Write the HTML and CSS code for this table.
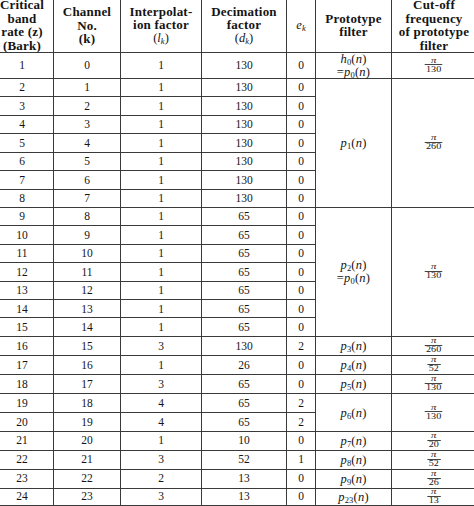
FILE: index.html
```html
<!DOCTYPE html>
<html>
<head>
<meta charset="utf-8">
<link rel="stylesheet" href="styles.css">
</head>
<body>
<div class="page">
<div class="grid">
  <div class="c h"><div>Critical<br>band<br>rate (z)<br>(Bark)</div></div>
  <div class="c h"><div>Channel<br>No.<br>(k)</div></div>
  <div class="c h"><div>Interpolat-<br>ion factor<br><span class="m">(<i>l</i><sub><i>k</i></sub>)</span></div></div>
  <div class="c h"><div>Decimation<br>factor<br><span class="m">(<i>d</i><sub><i>k</i></sub>)</span></div></div>
  <div class="c h"><div><span class="m"><i>e</i><sub><i>k</i></sub></span></div></div>
  <div class="c h"><div>Prototype<br>filter</div></div>
  <div class="c h"><div>Cut-off<br>frequency<br>of prototype<br>filter</div></div>

  <div class="c">1</div><div class="c">0</div><div class="c">1</div><div class="c">130</div><div class="c">0</div>
  <div class="c m"><div class="two"><span><i>h</i><sub>0</sub>(<i>n</i>)</span><br><span>=<i>p</i><sub>0</sub>(<i>n</i>)</span></div></div>
  <div class="c"><span class="fr"><i>π</i><span class="de">130</span></span></div>

  <div class="c">2</div><div class="c">1</div><div class="c">1</div><div class="c">130</div><div class="c">0</div>
  <div class="c m r7"><span><i>p</i><sub>1</sub>(<i>n</i>)</span></div>
  <div class="c r7"><span class="fr"><i>π</i><span class="de">260</span></span></div>
  <div class="c">3</div><div class="c">2</div><div class="c">1</div><div class="c">130</div><div class="c">0</div>
  <div class="c">4</div><div class="c">3</div><div class="c">1</div><div class="c">130</div><div class="c">0</div>
  <div class="c">5</div><div class="c">4</div><div class="c">1</div><div class="c">130</div><div class="c">0</div>
  <div class="c">6</div><div class="c">5</div><div class="c">1</div><div class="c">130</div><div class="c">0</div>
  <div class="c">7</div><div class="c">6</div><div class="c">1</div><div class="c">130</div><div class="c">0</div>
  <div class="c">8</div><div class="c">7</div><div class="c">1</div><div class="c">130</div><div class="c">0</div>

  <div class="c">9</div><div class="c">8</div><div class="c">1</div><div class="c">65</div><div class="c">0</div>
  <div class="c m r7"><div class="two"><span><i>p</i><sub>2</sub>(<i>n</i>)</span><br><span>=<i>p</i><sub>0</sub>(<i>n</i>)</span></div></div>
  <div class="c r7"><span class="fr"><i>π</i><span class="de">130</span></span></div>
  <div class="c">10</div><div class="c">9</div><div class="c">1</div><div class="c">65</div><div class="c">0</div>
  <div class="c">11</div><div class="c">10</div><div class="c">1</div><div class="c">65</div><div class="c">0</div>
  <div class="c">12</div><div class="c">11</div><div class="c">1</div><div class="c">65</div><div class="c">0</div>
  <div class="c">13</div><div class="c">12</div><div class="c">1</div><div class="c">65</div><div class="c">0</div>
  <div class="c">14</div><div class="c">13</div><div class="c">1</div><div class="c">65</div><div class="c">0</div>
  <div class="c">15</div><div class="c">14</div><div class="c">1</div><div class="c">65</div><div class="c">0</div>

  <div class="c">16</div><div class="c">15</div><div class="c">3</div><div class="c">130</div><div class="c">2</div>
  <div class="c m"><span><i>p</i><sub>3</sub>(<i>n</i>)</span></div>
  <div class="c"><span class="fr"><i>π</i><span class="de">260</span></span></div>

  <div class="c">17</div><div class="c">16</div><div class="c">1</div><div class="c">26</div><div class="c">0</div>
  <div class="c m"><span><i>p</i><sub>4</sub>(<i>n</i>)</span></div>
  <div class="c"><span class="fr"><i>π</i><span class="de">52</span></span></div>

  <div class="c">18</div><div class="c">17</div><div class="c">3</div><div class="c">65</div><div class="c">0</div>
  <div class="c m"><span><i>p</i><sub>5</sub>(<i>n</i>)</span></div>
  <div class="c"><span class="fr"><i>π</i><span class="de">130</span></span></div>

  <div class="c">19</div><div class="c">18</div><div class="c">4</div><div class="c">65</div><div class="c">2</div>
  <div class="c m r2"><span><i>p</i><sub>6</sub>(<i>n</i>)</span></div>
  <div class="c r2"><span class="fr"><i>π</i><span class="de">130</span></span></div>
  <div class="c">20</div><div class="c">19</div><div class="c">4</div><div class="c">65</div><div class="c">2</div>

  <div class="c">21</div><div class="c">20</div><div class="c">1</div><div class="c">10</div><div class="c">0</div>
  <div class="c m"><span><i>p</i><sub>7</sub>(<i>n</i>)</span></div>
  <div class="c"><span class="fr"><i>π</i><span class="de">20</span></span></div>

  <div class="c">22</div><div class="c">21</div><div class="c">3</div><div class="c">52</div><div class="c">1</div>
  <div class="c m"><span><i>p</i><sub>8</sub>(<i>n</i>)</span></div>
  <div class="c"><span class="fr"><i>π</i><span class="de">52</span></span></div>

  <div class="c">23</div><div class="c">22</div><div class="c">2</div><div class="c">13</div><div class="c">0</div>
  <div class="c m"><span><i>p</i><sub>9</sub>(<i>n</i>)</span></div>
  <div class="c"><span class="fr"><i>π</i><span class="de">26</span></span></div>

  <div class="c">24</div><div class="c">23</div><div class="c">3</div><div class="c">13</div><div class="c">0</div>
  <div class="c m"><span><i>p</i><sub>23</sub>(<i>n</i>)</span></div>
  <div class="c"><span class="fr"><i>π</i><span class="de">13</span></span></div>
</div>
</div>
</body>
</html>
```
FILE: styles.css
```css
html, body {
  margin: 0;
  padding: 0;
  background: #ffffff;
}

.page {
  width: 474px;
  height: 506px;
  overflow: hidden;
  font-family: "Liberation Serif", "Times New Roman", serif;
  color: #141414;
}

.grid {
  display: grid;
  margin: -4px 0 0 -9px;
  grid-template-columns: 63px 67px 81px 85px 29px 76px 85px;
  grid-template-rows: 56.5px 26.5px repeat(14, 18.43px) repeat(8, 18.97px) 17px;
}

.c {
  box-sizing: border-box;
  border-right: 1px solid #3a3a3a;
  border-bottom: 1px solid #3a3a3a;
  display: flex;
  align-items: center;
  justify-content: center;
  text-align: center;
  font-size: 11.5px;
  line-height: 1;
  padding-top: 1px;
}

.h {
  font-weight: bold;
  font-size: 13px;
  line-height: 13.4px;
  letter-spacing: 0.2px;
  padding-top: 3px;
}

.h .m {
  font-weight: normal;
  font-size: 12.5px;
  letter-spacing: 0;
}

.m {
  font-size: 12.5px;
  letter-spacing: 0.2px;
}

.m i {
  font-style: italic;
}

.m sub {
  font-size: 8.5px;
  vertical-align: -2px;
  line-height: 0;
  font-style: normal;
}

.m sub i {
  font-style: italic;
}

.two {
  line-height: 13px;
}

.r7 {
  grid-row: span 7;
}

.r2 {
  grid-row: span 2;
}

.fr {
  display: inline-flex;
  flex-direction: column;
  align-items: center;
  font-size: 7.5px;
  line-height: 7px;
  transform: scaleX(1.35);
  margin-top: -1px;
}

.fr i {
  font-size: 8px;
  line-height: 6.5px;
}

.de {
  border-top: 0.7px solid #444;
  padding: 0.5px 1px 0;
}
```
